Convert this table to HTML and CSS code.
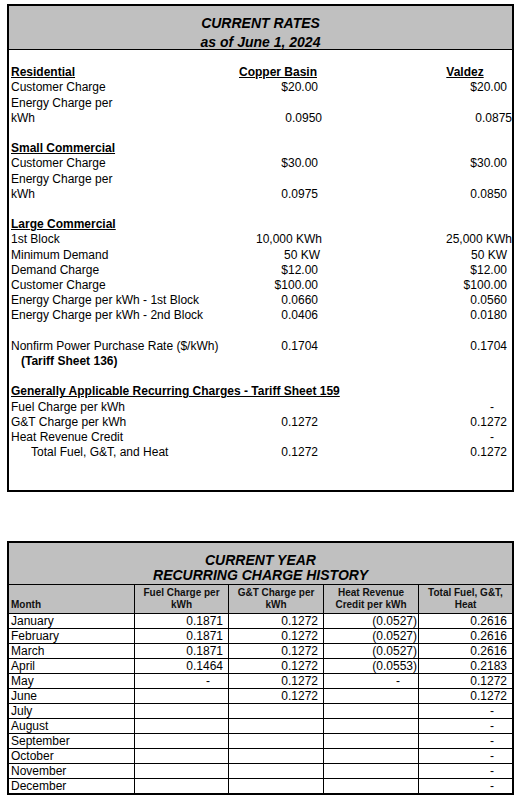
FILE: index.html
```html
<!DOCTYPE html>
<html>
<head>
	<title>Current Rates</title>
	<link rel="stylesheet" href="styles.css">
</head>
<body>
	<div class="sheet rates">
		<div class="sheet-title">CURRENT RATES<br>as of June 1, 2024</div>
		<div class="rate-grid">
			<div class="line">
				<div class="label sec">Residential</div>
				<div class="val v2 sec head">Copper Basin</div>
				<div class="v4 sec center">Valdez</div>
			</div>
			<div class="line">
				<div class="label">Customer Charge</div>
				<div class="val v2">$20.00</div>
				<div class="val v4">$20.00</div>
			</div>
			<div class="line">
				<div class="label">Energy Charge per<br>kWh</div>
				<div class="val v2 tight">0.0950</div>
				<div class="val v4 flush">0.0875</div>
			</div>
			<div class="gap"></div>

			<div class="line">
				<div class="label sec wide">Small Commercial</div>
			</div>
			<div class="line">
				<div class="label">Customer Charge</div>
				<div class="val v2">$30.00</div>
				<div class="val v4">$30.00</div>
			</div>
			<div class="line">
				<div class="label">Energy Charge per<br>kWh</div>
				<div class="val v2">0.0975</div>
				<div class="val v4">0.0850</div>
			</div>
			<div class="gap"></div>

			<div class="line">
				<div class="label sec wide">Large Commercial</div>
			</div>
			<div class="line">
				<div class="label">1st Block</div>
				<div class="val v2 tight">10,000 KWh</div>
				<div class="val v4 flush">25,000 KWh</div>
			</div>
			<div class="line">
				<div class="label">Minimum Demand</div>
				<div class="val v2 mid">50 KW</div>
				<div class="val v4">50 KW</div>
			</div>
			<div class="line">
				<div class="label">Demand Charge</div>
				<div class="val v2">$12.00</div>
				<div class="val v4">$12.00</div>
			</div>
			<div class="line">
				<div class="label">Customer Charge</div>
				<div class="val v2">$100.00</div>
				<div class="val v4">$100.00</div>
			</div>
			<div class="line">
				<div class="label">Energy Charge per kWh - 1st Block</div>
				<div class="val v2">0.0660</div>
				<div class="val v4">0.0560</div>
			</div>
			<div class="line">
				<div class="label">Energy Charge per kWh - 2nd Block</div>
				<div class="val v2">0.0406</div>
				<div class="val v4">0.0180</div>
			</div>
			<div class="gap"></div>

			<div class="line">
				<div class="label">Nonfirm Power Purchase Rate ($/kWh)</div>
				<div class="val v2">0.1704</div>
				<div class="val v4">0.1704</div>
			</div>
			<div class="line">
				<div class="label bold indent">(Tariff Sheet 136)</div>
			</div>
			<div class="gap"></div>

			<div class="line">
				<div class="label sec wide">Generally Applicable Recurring Charges - Tariff Sheet 159</div>
			</div>
			<div class="line">
				<div class="label">Fuel Charge per kWh</div>
				<div class="val v4 dash">-</div>
			</div>
			<div class="line">
				<div class="label">G&amp;T Charge per kWh</div>
				<div class="val v2">0.1272</div>
				<div class="val v4">0.1272</div>
			</div>
			<div class="line">
				<div class="label">Heat Revenue Credit</div>
				<div class="val v4 dash">-</div>
			</div>
			<div class="line">
				<div class="label indent-2">Total Fuel, G&amp;T, and Heat</div>
				<div class="val v2">0.1272</div>
				<div class="val v4">0.1272</div>
			</div>
		</div>
	</div>

	<div class="sheet history">
		<div class="sheet-title small-gap">CURRENT YEAR<br>RECURRING CHARGE HISTORY</div>
		<table class="history-table">
			<thead>
				<tr>
					<th class="c-month">Month</th>
					<th class="c-fuel">Fuel Charge per<br>kWh</th>
					<th class="c-gt">G&amp;T Charge per<br>kWh</th>
					<th class="c-heat">Heat Revenue<br>Credit per kWh</th>
					<th class="c-total">Total Fuel, G&amp;T,<br>Heat</th>
				</tr>
			</thead>
			<tbody>
				<tr><td>January</td><td class="num">0.1871</td><td class="num">0.1272</td><td class="num neg">(0.0527)</td><td class="num">0.2616</td></tr>
				<tr><td>February</td><td class="num">0.1871</td><td class="num">0.1272</td><td class="num neg">(0.0527)</td><td class="num">0.2616</td></tr>
				<tr><td>March</td><td class="num">0.1871</td><td class="num">0.1272</td><td class="num neg">(0.0527)</td><td class="num">0.2616</td></tr>
				<tr><td>April</td><td class="num">0.1464</td><td class="num">0.1272</td><td class="num neg">(0.0553)</td><td class="num">0.2183</td></tr>
				<tr><td>May</td><td class="num dash">-</td><td class="num">0.1272</td><td class="num dash">-</td><td class="num">0.1272</td></tr>
				<tr><td>June</td><td></td><td class="num">0.1272</td><td></td><td class="num">0.1272</td></tr>
				<tr><td>July</td><td></td><td></td><td></td><td class="num dash">-</td></tr>
				<tr><td>August</td><td></td><td></td><td></td><td class="num dash">-</td></tr>
				<tr><td>September</td><td></td><td></td><td></td><td class="num dash">-</td></tr>
				<tr><td>October</td><td></td><td></td><td></td><td class="num dash">-</td></tr>
				<tr><td>November</td><td></td><td></td><td></td><td class="num dash">-</td></tr>
				<tr><td>December</td><td></td><td></td><td></td><td class="num dash">-</td></tr>
			</tbody>
		</table>
	</div>
</body>
</html>
```

FILE: styles.css
```css
body {
	margin: 0;
	font-family: "Liberation Sans", Arial, sans-serif;
	font-size: 12px;
	color: #000;
	background-color: #fff;
}
.sheet {
	width: 507px;
	margin-left: 7px;
	border: 2px solid #000;
	box-sizing: border-box;
}
.rates {
	margin-top: 4px;
}
.history {
	margin-top: 49px;
}
.sheet-title {
	box-sizing: border-box;
	height: 44px;
	padding-top: 8px;
	background-color: #c0c0c0;
	border-bottom: 1px solid #000;
	text-align: center;
	font-size: 14px;
	font-weight: bold;
	font-style: italic;
	line-height: 19px;
}
.sheet-title.small-gap {
	height: 42px;
	padding-top: 10px;
	line-height: 15px;
}

/* top block */
.rate-grid {
	padding: 15.2px 0 29.6px;
}
.line {
	display: grid;
	grid-template-columns: 219px 95px 95px 94px;
	align-items: end;
	line-height: 15.2px;
}
.gap {
	height: 15.2px;
}
.label {
	grid-column: 1;
	padding-left: 2px;
	white-space: nowrap;
}
.wide {
	grid-column: 1 / -1;
}
.sec {
	font-weight: bold;
	text-decoration: underline;
}
.bold {
	font-weight: bold;
}
.indent {
	padding-left: 12px;
}
.indent-2 {
	padding-left: 22px;
}
.val {
	text-align: right;
	padding-right: 5px;
	white-space: nowrap;
}
.v2 {
	grid-column: 2;
}
.v4 {
	grid-column: 4;
}
.center {
	text-align: center;
}
.val.head {
	padding-right: 6px;
}
.val.tight {
	padding-right: 1px;
}
.val.flush {
	padding-right: 0;
}
.val.mid {
	padding-right: 3px;
}
.val.dash {
	padding-right: 18px;
}

/* history table */
.history-table {
	width: 503px;
	table-layout: fixed;
	border-collapse: separate;
	border-spacing: 0;
}
.history-table th {
	box-sizing: border-box;
	height: 28px;
	padding: 0 0 3px;
	background-color: #c0c0c0;
	vertical-align: bottom;
	text-align: center;
	font-size: 10px;
	font-weight: bold;
	line-height: 11.5px;
	color: #111;
}
.history-table th.c-month {
	text-align: left;
	padding-left: 2px;
}
.c-month {
	width: 125px;
}
.c-fuel {
	width: 94px;
}
.c-gt {
	width: 95px;
}
.c-heat {
	width: 95px;
}
.c-total {
	width: 94px;
}
.history-table th + th,
.history-table td + td {
	border-left: 1px solid #000;
}
.history-table td {
	border-top: 1px solid #000;
	padding: 0 0 0 2px;
	line-height: 14px;
	height: 14px;
	white-space: nowrap;
}
.history-table td.num {
	text-align: right;
	padding-right: 5px;
}
.history-table td.neg {
	padding-right: 1px;
}
.history-table td.dash {
	padding-right: 18px;
}
```
